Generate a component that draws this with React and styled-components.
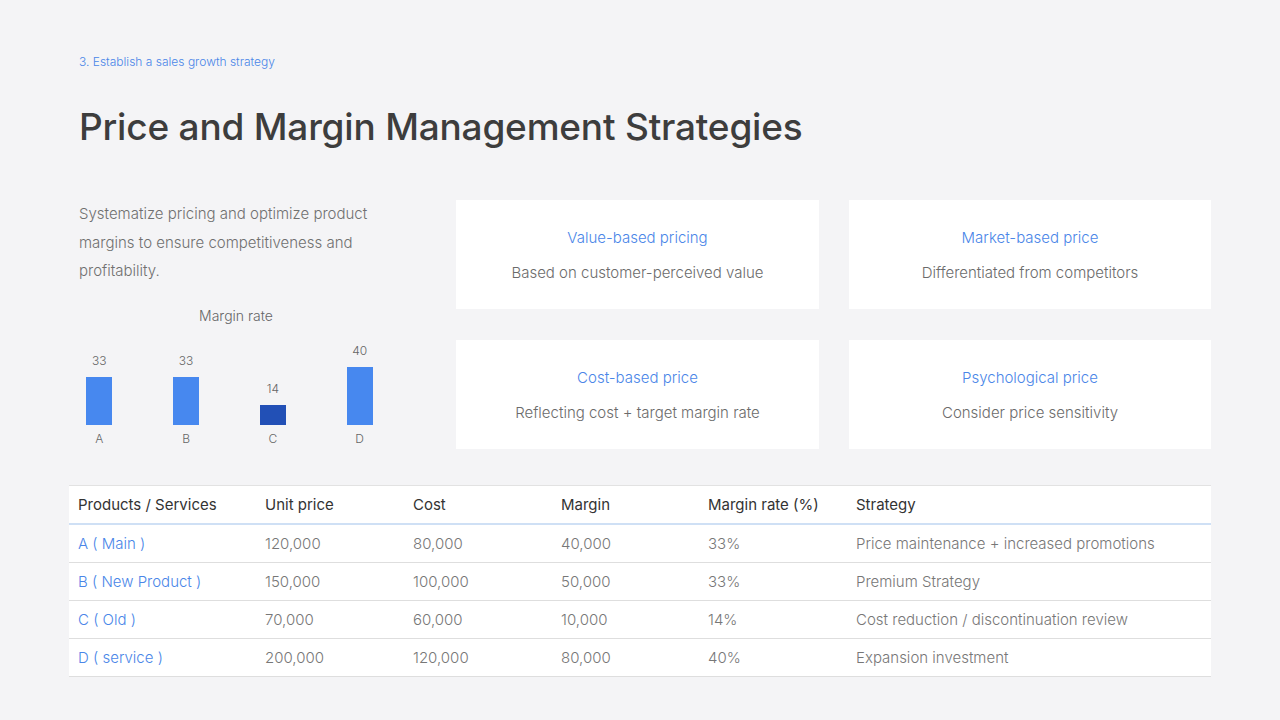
import React from "react";
import styled, { createGlobalStyle } from "styled-components";

const Global = createGlobalStyle`
  body { margin: 0; background: #f4f4f6; font-family: Inter, "Noto Sans", sans-serif; font-weight: 300; }
`;

const Page = styled.div`
  width: 1280px; height: 720px; box-sizing: border-box;
  padding: 54px 69px 0 69px;
`;
const Kicker = styled.div`
  font-size: 12px; color: #4a86e8; padding-left: 10px;
`;
const Title = styled.h1`
  margin: 35px 0 0 10px; font-size: 37px; font-weight: 500; color: #3d3d3d; letter-spacing: -0.2px;
`;
const Top = styled.div`
  display: grid; grid-template-columns: 357px 363px 362px; column-gap: 30px;
  margin-top: 44px;
`;
const Left = styled.div` padding-left: 10px; padding-top: 7px; `;
const Para = styled.p`
  margin: 0; font-size: 15px; line-height: 28.5px; color: #707070; width: 310px;
`;
const ChartTitle = styled.div`
  margin-top: 21px; text-align: center; width: 314px; font-size: 14px; color: #666;
`;
const Chart = styled.div`
  display: flex; align-items: flex-end; height: 112px; margin-top: 10px; margin-left: 0;
`;
const BarCol = styled.div`
  width: 44px; margin-right: 46px; display: flex; flex-direction: column; align-items: center;
  font-size: 12px; color: #666;
`;
const Bar = styled.div`
  width: 26px; background: ${(p) => (p.dark ? "#2250b6" : "#4788ef")}; margin: 9px 0 6px;
`;
const Cards = styled.div`
  grid-column: 2 / 4; display: grid; grid-template-columns: 363px 362px; gap: 31px 30px;
  padding-top: 7px;
`;
const Card = styled.div`
  background: #fff; height: 109px; display: flex; flex-direction: column; align-items: center;
  justify-content: center; gap: 16px;
`;
const CardTitle = styled.div` font-size: 15px; color: #4a86e8; `;
const CardText = styled.div` font-size: 15px; color: #6b6b6b; `;
const Table = styled.div`
  margin-top: 36px; background: #fff; border-top: 1px solid #e2e2e2;
`;
const Row = styled.div`
  display: grid; grid-template-columns: 187px 148px 148px 147px 148px 1fr;
  height: 37px; align-items: center; padding-left: 9px;
  border-bottom: 1px solid ${(p) => (p.head ? "#cfe0f5" : "#dedede")};
  border-bottom-width: ${(p) => (p.head ? "2px" : "1px")};
  font-size: 15px; color: ${(p) => (p.head ? "#333" : "#777")};
  font-weight: ${(p) => (p.head ? 400 : 300)};
`;
const First = styled.span` color: ${(p) => (p.head ? "#333" : "#4a86e8")}; `;

const bars = [["A", 33, 48], ["B", 33, 48], ["C", 14, 20, true], ["D", 40, 58]];
const cards = [
  ["Value-based pricing", "Based on customer-perceived value"],
  ["Market-based price", "Differentiated from competitors"],
  ["Cost-based price", "Reflecting cost + target margin rate"],
  ["Psychological price", "Consider price sensitivity"],
];
const rows = [
  ["A ( Main )", "120,000", "80,000", "40,000", "33%", "Price maintenance + increased promotions"],
  ["B ( New Product )", "150,000", "100,000", "50,000", "33%", "Premium Strategy"],
  ["C ( Old )", "70,000", "60,000", "10,000", "14%", "Cost reduction / discontinuation review"],
  ["D ( service )", "200,000", "120,000", "80,000", "40%", "Expansion investment"],
];

export default function App() {
  return (
    <Page>
      <Global />
      <Kicker>3. Establish a sales growth strategy</Kicker>
      <Title>Price and Margin Management Strategies</Title>
      <Top>
        <Left>
          <Para>Systematize pricing and optimize product margins to ensure competitiveness and profitability.</Para>
          <ChartTitle>Margin rate</ChartTitle>
          <Chart>
            {bars.map(([l, v, h, d]) => (
              <BarCol key={l}>
                <span>{v}</span>
                <Bar dark={d} style={{ height: h }} />
                <span>{l}</span>
              </BarCol>
            ))}
          </Chart>
        </Left>
        <Cards>
          {cards.map(([t, s]) => (
            <Card key={t}>
              <CardTitle>{t}</CardTitle>
              <CardText>{s}</CardText>
            </Card>
          ))}
        </Cards>
      </Top>
      <Table>
        <Row head>
          <First head>Products / Services</First>
          <span>Unit price</span><span>Cost</span><span>Margin</span>
          <span>Margin rate (%)</span><span>Strategy</span>
        </Row>
        {rows.map((r) => (
          <Row key={r[0]}>
            <First>{r[0]}</First>
            {r.slice(1).map((c, i) => <span key={i}>{c}</span>)}
          </Row>
        ))}
      </Table>
    </Page>
  );
}
